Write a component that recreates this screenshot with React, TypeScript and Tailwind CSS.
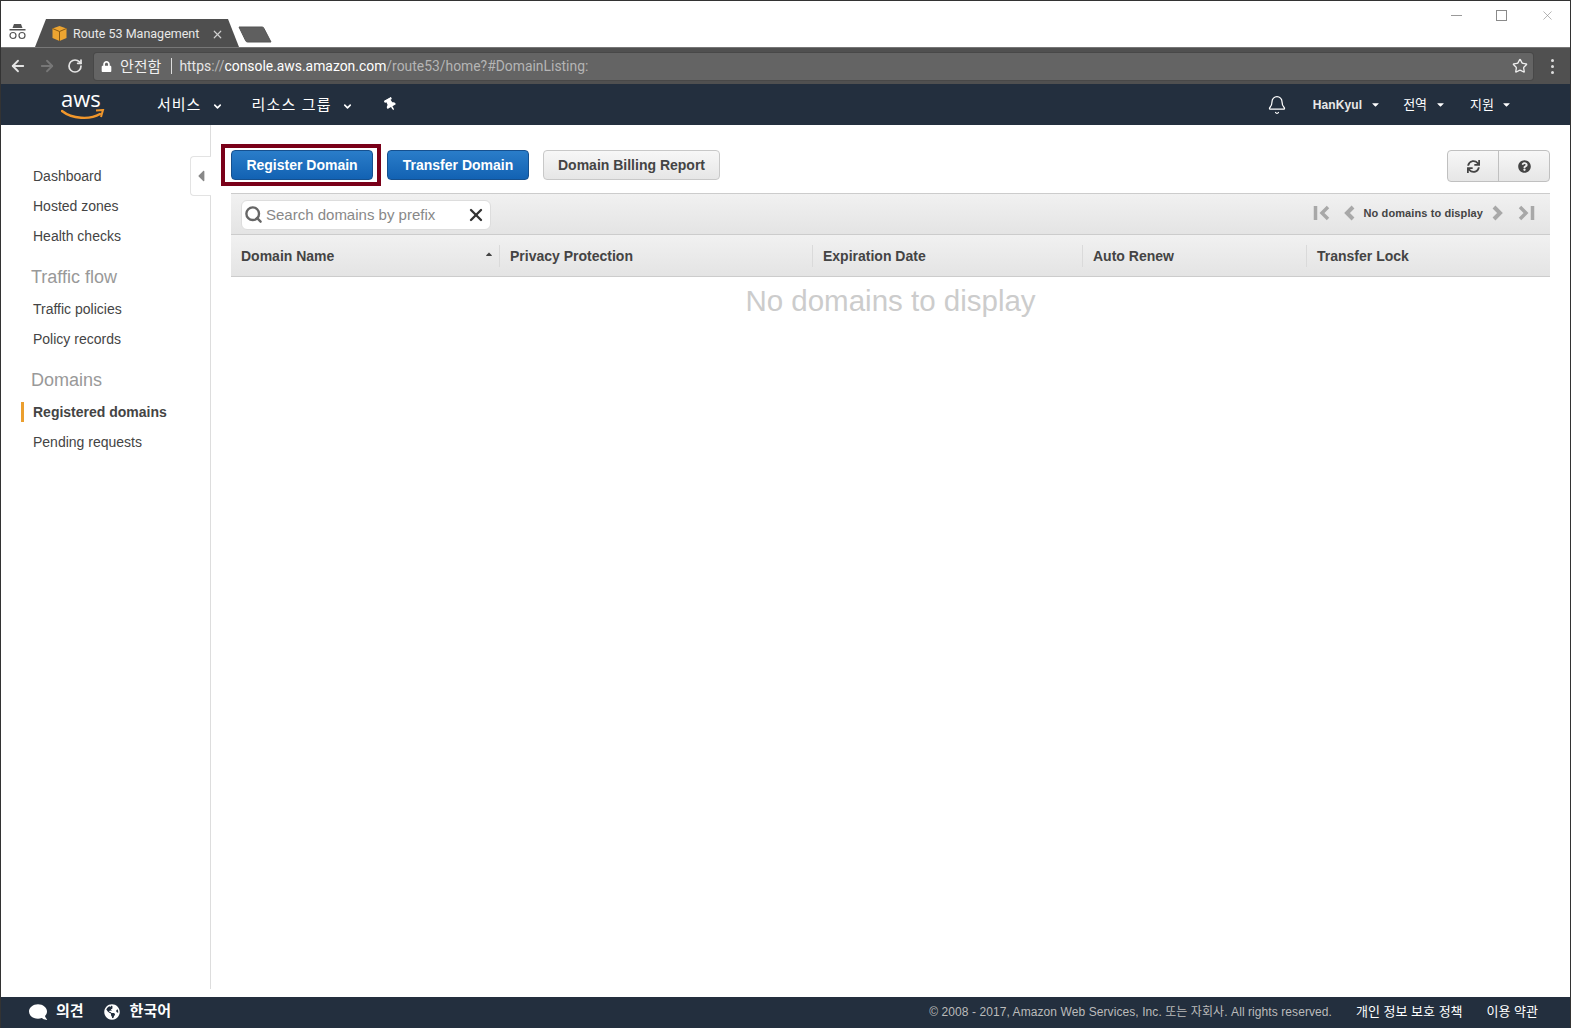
import { ArrowLeft, ArrowRight, RotateCw, Star, Bell, ChevronDown, Search, X } from 'lucide-react';
import { FaCaretDown, FaCaretLeft, FaCaretUp, FaComment, FaGlobeAmericas, FaLock, FaQuestionCircle, FaSync, FaThumbtack } from 'react-icons/fa';

const sans = { fontFamily: '"Liberation Sans", "Noto Sans CJK KR", sans-serif' };

function AwsLogo() {
  return (
    <div className="relative w-[46px] h-[32px]">
      <span className="absolute left-0 top-[-6px] text-[22px] leading-[30px] text-white font-['Open_Sans',sans-serif]">aws</span>
      <svg className="absolute left-0 top-[20px]" width="44" height="12" viewBox="0 0 44 12">
        <path d="M1 2c10 8 28 9 38 3" fill="none" stroke="#f0962b" strokeWidth="2.4" strokeLinecap="round" />
        <path d="M35 1.5l7-.5-2 7" fill="none" stroke="#f0962b" strokeWidth="2" />
      </svg>
    </div>
  );
}

function BrowserChrome() {
  return (
    <>
      {/* Title bar */}
      <div className="relative h-[46px] bg-white">
        <svg className="absolute left-[7px] top-[22px]" width="19" height="19" viewBox="0 0 19 19" fill="#555">
          <path d="M6 1h7l1.500 4H4.500z" />
          <rect x="1.500" y="6" width="16" height="1.500" />
          <circle cx="5" cy="12.500" r="3" fill="none" stroke="#555" strokeWidth="1.200" />
          <circle cx="14" cy="12.500" r="3" fill="none" stroke="#555" strokeWidth="1.200" />
        </svg>
        <svg className="absolute left-[34px] top-[18px]" width="205" height="28" viewBox="0 0 205 28">
          <path d="M0 28L11 0h182l11 28z" fill="#4f4f4f" />
        </svg>
        <svg className="absolute left-[50px] top-[24px]" width="17" height="17" viewBox="0 0 17 17">
          <path d="M8.500 1L15.500 3.500V13L8.500 16L1.500 13V3.500z" fill="#eda531" />
          <path d="M1.500 3.500L8.500 6.500L15.500 3.500M8.500 6.500V16" fill="none" stroke="#8a5a12" strokeWidth="1" />
        </svg>
        <div className="absolute left-[72px] top-[24px] whitespace-nowrap text-[12.500px] leading-[18px] text-[#e8e8e8] font-['Roboto',sans-serif]">Route 53 Management</div>
        <X className="absolute left-[210px] top-[27px] text-[#cfcfcf]" size={13} strokeWidth={2.200} />
        <svg className="absolute left-[237px] top-[25px]" width="35" height="17" viewBox="0 0 35 17">
          <path d="M1 1h23a2 2 0 0 1 2 1.500l7 13.500H9.500a2 2 0 0 1-1.800-1.200z" fill="#5f5f5f" stroke="#555" />
        </svg>
        <div className="absolute left-[1450px] top-[14px] h-px w-[11px] bg-[#9a9a9a]" />
        <div className="absolute left-[1495px] top-[9px] h-[11px] w-[11px] border border-[#8a8a8a]" />
        <X className="absolute left-[1539px] top-[7px] text-[#8a8a8a]" size={15} strokeWidth={1} />
      </div>

      {/* Address bar */}
      <div className="flex h-[37px] items-center border-t border-[#777] bg-[#505050] pr-[13px]">
        <ArrowLeft className="ml-[8px] text-[#e4e4e4]" size={18} strokeWidth={2.400} />
        <ArrowRight className="ml-[11px] text-[#777]" size={18} strokeWidth={2.400} />
        <RotateCw className="ml-[11px] text-[#e4e4e4]" size={16} strokeWidth={2.600} />
        <div className="ml-[11px] flex h-[27px] flex-1 items-center rounded-[3px] bg-[#646464] pl-[7px] pr-[5px] shadow-[0_0_0_1px_#484848]">
          <FaLock className="text-white" size={11} />
          <span className="ml-[8px] text-[15px] text-[#f0f0f0] font-['Noto_Sans_CJK_KR',sans-serif]">안전함</span>
          <span className="ml-[10px] h-[16px] w-px bg-[#ddd]" />
          <span className="ml-[7px] text-[13.900px] text-[#e6e6e6] font-['Roboto',sans-serif]">
            https<span className="text-[#b5b5b5]">://</span><span className="text-white">console.aws.amazon.com</span><span className="text-[#b5b5b5]">/route53/home?#DomainListing:</span>
          </span>
          <Star className="ml-auto text-[#eee]" size={16} strokeWidth={2} />
        </div>
        <div className="ml-[14px] flex w-[10px] flex-col items-center gap-[3px]">
          <span className="h-[3px] w-[3px] rounded-full bg-[#ddd]" />
          <span className="h-[3px] w-[3px] rounded-full bg-[#ddd]" />
          <span className="h-[3px] w-[3px] rounded-full bg-[#ddd]" />
        </div>
      </div>
    </>
  );
}

function TopNav() {
  return (
    <div className="flex h-[41px] items-center bg-[#232f3e] pl-[60px] pr-[58px] text-white" style={sans}>
      <AwsLogo />
      <span className="ml-[50px] mt-px text-[15px] tracking-[1px]">서비스</span>
      <ChevronDown className="ml-[11px] mt-[3px]" size={11} strokeWidth={3.500} />
      <span className="ml-[28px] mt-px text-[15px] tracking-[1.200px]">리소스 그룹</span>
      <ChevronDown className="ml-[10px] mt-[3px]" size={11} strokeWidth={3.500} />
      <FaThumbtack className="ml-[31px] -rotate-30" size={13} />
      <Bell className="ml-auto" size={20} strokeWidth={1.500} />
      <span className="ml-[26px] text-[12px] font-bold text-[#e8e8e8] tracking-[0.1px]">HanKyul</span>
      <FaCaretDown className="ml-[8px]" size={11} />
      <span className="ml-[22px] text-[13px]">전역</span>
      <FaCaretDown className="ml-[8px]" size={11} />
      <span className="ml-[24px] text-[13px]">지원</span>
      <FaCaretDown className="ml-[7px]" size={11} />
    </div>
  );
}

function Sidebar() {
  const link = 'h-[30px] pl-[32px] text-[14px] leading-[30px] text-[#444]';
  const heading = 'pl-[30px] text-[18px] leading-[24px] text-[#999]';
  return (
    <div className="relative mb-[8px] w-[210px] shrink-0 border-r border-[#ddd] pt-[36px]">
      <div className={link}>Dashboard</div>
      <div className={link}>Hosted zones</div>
      <div className={link}>Health checks</div>
      <div className={`${heading} mt-[14px] mb-[5px]`}>Traffic flow</div>
      <div className={link}>Traffic policies</div>
      <div className={link}>Policy records</div>
      <div className={`${heading} mt-[14px] mb-[5px]`}>Domains</div>
      <div className={`${link} relative font-bold`}>
        <span className="absolute left-[20px] top-[5px] h-[20px] w-[3px] bg-[#eb9f2f]" />
        Registered domains
      </div>
      <div className={link}>Pending requests</div>
      {/* collapse tab */}
      <div className="absolute right-[-1px] top-[31px] flex h-[40px] w-[21px] items-center justify-center rounded-l-[4px] border border-r-0 border-[#e3e3e3] bg-white">
        <FaCaretLeft className="text-[#888]" size={18} />
      </div>
    </div>
  );
}

function DomainTable() {
  const columns = [
    { name: 'Domain Name', width: 'w-[269px]' },
    { name: 'Privacy Protection', width: 'w-[313px]' },
    { name: 'Expiration Date', width: 'w-[270px]' },
    { name: 'Auto Renew', width: 'w-[224px]' },
    { name: 'Transfer Lock', width: 'flex-1' },
  ];
  return (
    <div className="mt-[9px]">
      <div className="flex h-[42px] items-center justify-between border-y border-[#ccc] bg-gradient-to-b from-[#f1f1f1] to-[#e4e4e4] pl-[10px] pr-[15px] pt-px">
        <div className="flex h-[30px] w-[250px] items-center rounded-[6px] border border-[#ddd] bg-white pl-[2px] pr-[4px]">
          <Search className="text-[#666]" size={19} strokeWidth={3} />
          <span className="ml-[3px] mt-px text-[15px] text-[#888]">Search domains by prefix</span>
          <X className="ml-auto text-[#333]" size={20} strokeWidth={2.800} />
        </div>
        <div className="mb-[3px] flex items-center text-[#a8a8a8]">
          <svg width="18" height="16" viewBox="0 0 18 16" fill="none" stroke="currentColor" strokeWidth="3.500">
            <path d="M2.500 1v14M15 2L9 8l6 6" />
          </svg>
          <svg className="ml-[12px]" width="12" height="16" viewBox="0 0 12 16" fill="none" stroke="currentColor" strokeWidth="4">
            <path d="M10 2L4 8l6 6" />
          </svg>
          <span className="ml-[9px] mr-[9px] text-[11px] font-bold tracking-[0.1px] text-[#444]">No domains to display</span>
          <svg width="12" height="16" viewBox="0 0 12 16" fill="none" stroke="currentColor" strokeWidth="4">
            <path d="M2 2l6 6-6 6" />
          </svg>
          <svg className="ml-[13px]" width="18" height="16" viewBox="0 0 18 16" fill="none" stroke="currentColor" strokeWidth="3.500">
            <path d="M15.500 1v14M3 2l6 6-6 6" />
          </svg>
        </div>
      </div>
      <div className="flex h-[42px] items-center border-b border-[#ccc] bg-gradient-to-b from-[#f1f1f1] to-[#e4e4e4] pt-px">
        {columns.map((col, index) => (
          <div key={col.name} className={`${col.width} relative flex h-[22px] items-center pl-[10px] text-[14px] font-bold text-[#444] ${index < 4 ? 'border-r border-[#dadada]' : ''}`}>
            {col.name}
            {index === 0 && <FaCaretUp className="absolute right-[5px] top-[4px] text-[#444]" size={10} />}
          </div>
        ))}
      </div>
      <div className="mt-[6px] text-center text-[29.500px] leading-[36px] text-[#ccc]">No domains to display</div>
    </div>
  );
}

function Footer() {
  return (
    <div className="flex h-[31px] items-center bg-[#232f3e] pb-[2px] pl-[28px] pr-[32px] text-white" style={sans}>
      <FaComment className="-scale-x-100" size={18} />
      <span className="ml-[9px] text-[15px] font-bold">의견</span>
      <FaGlobeAmericas className="ml-[20px]" size={16} />
      <span className="ml-[10px] text-[15px] font-bold">한국어</span>
      <span className="ml-auto text-[12px] tracking-[0.08px] text-[#bbb]">© 2008 - 2017, Amazon Web Services, Inc. 또는 자회사. All rights reserved.</span>
      <span className="ml-[24px] text-[13px]">개인 정보 보호 정책</span>
      <span className="ml-[24px] text-[13px]">이용 약관</span>
    </div>
  );
}

export default function App() {
  const blue = 'flex h-[30px] w-[142px] items-center justify-center rounded-[4px] border border-[#15508f] bg-gradient-to-b from-[#2a7dc9] to-[#1262b3] text-[14px] font-bold text-white';
  return (
    <div className="flex h-[1028px] w-[1571px] flex-col overflow-hidden border-x border-t border-[#333] bg-white" style={sans}>
      <BrowserChrome />
      <TopNav />
      <div className="flex flex-1">
        <Sidebar />
        <div className="flex-1 pl-[20px] pr-[20px] pt-[21px]">
          <div className="flex h-[38px] items-center">
            <div className="-ml-[10px] shrink-0 border-4 border-[#7a0019] py-[2px] pl-[6px] pr-[4px]">
              <button className={blue}>Register Domain</button>
            </div>
            <button className={`${blue} ml-[6px]`}>Transfer Domain</button>
            <button className="ml-[14px] flex h-[30px] w-[177px] items-center justify-center rounded-[4px] border border-[#c8c8c8] bg-gradient-to-b from-[#f7f7f7] to-[#e6e6e6] text-[14px] font-bold text-[#444]">Domain Billing Report</button>
            <div className="ml-auto mt-[2px] flex h-[32px] w-[103px] rounded-[4px] border border-[#c0c0c0] bg-gradient-to-b from-[#f7f7f7] to-[#e6e6e6] text-[#444]">
              <div className="flex flex-1 items-center justify-center border-r border-[#c0c0c0]">
                <FaSync size={13} />
              </div>
              <div className="flex flex-1 items-center justify-center">
                <FaQuestionCircle size={13} />
              </div>
            </div>
          </div>
          <DomainTable />
        </div>
      </div>
      <Footer />
    </div>
  );
}
